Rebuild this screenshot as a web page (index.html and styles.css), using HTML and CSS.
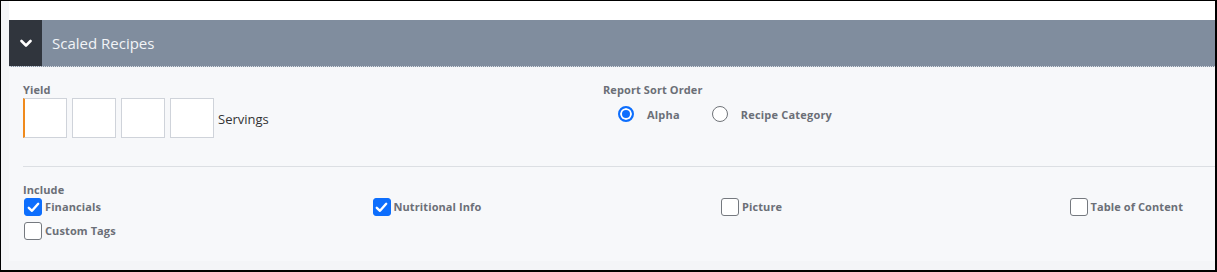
FILE: index.html
```html
<html>
<head>
    <link rel="stylesheet" href="styles.css">
</head>
<body>
    <div class="frame">
        <div class="panel">
            <div class="panel-header">
                <div class="toggle">
                    <svg width="12" height="9" viewBox="0 0 12 9">
                        <path d="M1.5 2 L6 6.5 L10.5 2" fill="none" stroke="#fff" stroke-width="2.6" stroke-linecap="round" stroke-linejoin="round"/>
                    </svg>
                </div>
                <div class="title">Scaled Recipes</div>
            </div>
            <div class="panel-body">
                <div class="top-row">
                    <div class="yield">
                        <div class="label">Yield</div>
                        <div class="yield-inputs">
                            <input type="text" class="box focused">
                            <input type="text" class="box">
                            <input type="text" class="box">
                            <input type="text" class="box">
                            <span class="servings">Servings</span>
                        </div>
                    </div>
                    <div class="sort">
                        <div class="label">Report Sort Order</div>
                        <div class="radios">
                            <label class="radio"><span class="dot checked"></span>Alpha</label>
                            <label class="radio"><span class="dot"></span>Recipe Category</label>
                        </div>
                    </div>
                </div>
                <hr class="divider">
                <div class="label">Include</div>
                <div class="checks">
                    <label class="check"><span class="box-check checked"><svg width="13" height="11" viewBox="0 0 13 11"><path d="M1.8 5.8 L5 8.8 L11.2 1.8" fill="none" stroke="#fff" stroke-width="2.4" stroke-linecap="round" stroke-linejoin="round"/></svg></span>Financials</label>
                    <label class="check"><span class="box-check checked"><svg width="13" height="11" viewBox="0 0 13 11"><path d="M1.8 5.8 L5 8.8 L11.2 1.8" fill="none" stroke="#fff" stroke-width="2.4" stroke-linecap="round" stroke-linejoin="round"/></svg></span>Nutritional Info</label>
                    <label class="check"><span class="box-check"></span>Picture</label>
                    <label class="check"><span class="box-check"></span>Table of Content</label>
                    <label class="check"><span class="box-check"></span>Custom Tags</label>
                </div>
            </div>
        </div>
    </div>
</body>
</html>
```

FILE: styles.css
```css
body {
    margin: 0;
    font-family: "Open Sans", "Noto Sans", sans-serif;
}
.frame {
    width: 1217px;
    height: 272px;
    box-sizing: border-box;
    border: 1px solid #000;
    border-right-width: 2px;
    border-bottom-width: 2px;
    background-color: #f4f5f7;
    padding-left: 8px;
    overflow: hidden;
}
.panel {
    background-color: #fff;
    padding-top: 19px;
}
.panel-header {
    display: flex;
    align-items: center;
    height: 46px;
    background-color: #808d9e;
    border-bottom: 1px dotted #d8dde4;
}
.toggle {
    width: 33px;
    height: 46px;
    background-color: #30353d;
    display: flex;
    justify-content: center;
    align-items: center;
}
.title {
    color: #f2f4f7;
    font-size: 15px;
    padding-left: 10px;
    padding-bottom: 1px;
}
.panel-body {
    background-color: #f7f8fa;
    padding: 16px 0 15px 14px;
}
.label {
    font-size: 11px;
    font-weight: 700;
    color: #6b6f77;
    line-height: 14px;
    letter-spacing: 0.1px;
}
.top-row {
    display: flex;
}
.yield {
    width: 580px;
}
.yield-inputs {
    display: flex;
    align-items: center;
    gap: 5px;
    margin-top: 1px;
}
.box {
    width: 44px;
    height: 40px;
    box-sizing: border-box;
    border: 1px solid #cfd3da;
    background-color: #fff;
    margin: 0;
    padding: 0;
}
.box.focused {
    border-left: 2px solid #f08a1c;
}
.servings {
    font-size: 13px;
    color: #333;
    margin-left: -1px;
    padding-top: 1px;
}
.radios {
    display: flex;
    align-items: center;
    height: 34px;
    padding-left: 15px;
}
.radio {
    display: flex;
    align-items: center;
    font-size: 11px;
    font-weight: 700;
    color: #6b6f77;
    margin-right: 32px;
    letter-spacing: 0.2px;
}
.dot {
    width: 16px;
    height: 16px;
    box-sizing: border-box;
    border: 1px solid #6f7378;
    border-radius: 50%;
    background-color: #fff;
    margin-right: 13px;
}
.dot.checked {
    border: 2px solid #0d6efd;
    background-color: #0d6efd;
    box-shadow: inset 0 0 0 2px #fff;
}
.divider {
    border: none;
    border-top: 1px solid #dcdfe3;
    margin: 28px 0 16px 0;
}
.checks {
    display: grid;
    grid-template-columns: repeat(4, 348.5px);
    grid-auto-rows: 24px;
    margin-top: 1px;
}
.check {
    display: flex;
    align-items: flex-start;
    font-size: 11px;
    font-weight: 700;
    color: #6b6f77;
    line-height: 18px;
    letter-spacing: 0.1px;
}
.box-check {
    width: 18px;
    height: 18px;
    box-sizing: border-box;
    border: 1px solid #75797f;
    border-radius: 3px;
    background-color: #fff;
    margin: 0 3px 0 1px;
    display: flex;
    justify-content: center;
    align-items: center;
}
.box-check.checked {
    background-color: #0d6efd;
    border-color: #0d6efd;
}
```
